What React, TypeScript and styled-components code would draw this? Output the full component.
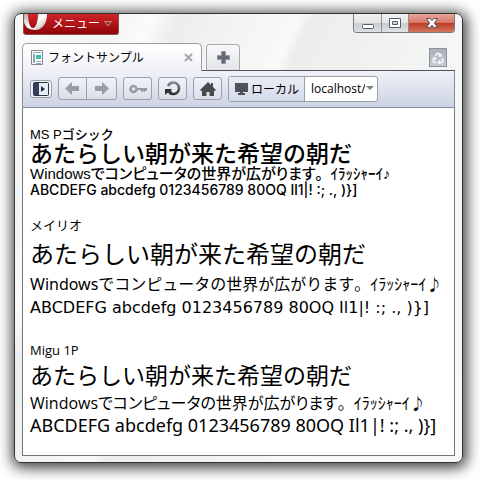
import React from 'react';
import styled, { createGlobalStyle } from 'styled-components';

const GlobalStyle = createGlobalStyle`
  * { box-sizing: border-box; }
  body { margin: 0; background: #fff; color: #000; font-family: "Open Sans", "Noto Sans CJK JP", sans-serif; }
  button, input { font: inherit; color: inherit; margin: 0; }
  svg { display: block; flex: none; }
`;

const Desktop = styled.div`
  padding: 13px 17px 17px 14px;
`;

const Window = styled.main`
  padding: 0 7px 6px;
  border: 1px solid #333;
  border-radius: 7px;
  background: linear-gradient(115deg, #fafafa 0, #f3f4f4 95px, #fbfbfb 125px, #eceeee 150px, #f1f2f2 190px, #f8f9f9 260px, #eceeee 270px, #f5f6f6 420px, #f7f8f8 100%);
  box-shadow: 1px 2px 14px 3px rgba(0, 0, 0, 0.75);
`;

const TitleBar = styled.header`
  display: flex;
  align-items: flex-start;
  justify-content: space-between;
  height: 29px;
`;

const MenuButton = styled.button`
  display: flex;
  align-items: center;
  gap: 3px;
  width: 96px;
  height: 21px;
  margin-left: 1px;
  padding: 0 6px 0 0;
  overflow: hidden;
  border: 1px solid #8a5050;
  border-top: 0;
  border-radius: 0 0 3px 3px;
  background: linear-gradient(#cf2529, #b11316 50%, #8d0507);
  color: #fff;
  font-size: 12px;
  line-height: 20px;
`;

const MenuText = styled.span`
  flex: 1;
  text-align: left;
`;

const Captions = styled.div`
  display: flex;
  height: 19px;
  overflow: hidden;
  border: 1px solid #777b80;
  border-top: 0;
  border-radius: 0 0 4px 4px;
`;

const CaptionButton = styled.button<{ $close?: boolean }>`
  display: grid;
  place-items: center;
  width: ${p => (p.$close ? 46 : 27)}px;
  padding: 0;
  border: 0;
  background: ${p => (p.$close
    ? 'linear-gradient(#e7a69a, #d67868 48%, #bd3c26 52%, #d5765f)'
    : 'linear-gradient(#f1f2f3, #e2e4e6 48%, #cbced1 52%, #dfe1e3)')};
  & + & { border-left: 1px solid #8c9095; }
`;

const TabBar = styled.nav`
  display: flex;
  align-items: flex-end;
  height: 28px;
`;

const Tab = styled.div`
  display: flex;
  align-items: center;
  gap: 5px;
  width: 180px;
  height: 28px;
  padding: 0 8px 0 8px;
  border: 1px solid #999ca3;
  border-bottom: 0;
  border-radius: 5px 5px 0 0;
  background: linear-gradient(#fff, #f0f1f7);
  font-size: 12px;
`;

const TabTitle = styled.span`
  flex: 1;
  line-height: 18px;
`;

const PlainButton = styled.button`
  display: grid;
  place-items: center;
  padding: 0;
  border: 0;
  background: none;
`;

const TabRest = styled.div`
  display: flex;
  align-items: flex-end;
  justify-content: space-between;
  flex: 1;
  height: 28px;
  padding: 0 8px 0 4px;
  border-bottom: 1px solid #51545c;
`;

const NewTab = styled(PlainButton)`
  width: 34px;
  height: 26px;
  border: 1px solid #a5a8ad;
  border-bottom: 0;
  border-radius: 4px 4px 0 0;
  background: linear-gradient(#f9f9fa, #e3e5e9);
`;

const Trash = styled(PlainButton)`
  width: 18px;
  height: 19px;
  margin-bottom: 3px;
  border: 1px solid #8d939b;
  background: linear-gradient(#a9b0ba, #c6cbd2);
`;

const Toolbar = styled.div`
  display: flex;
  align-items: center;
  gap: 6px;
  height: 37px;
  padding: 0 7px 1px;
  border: 1px solid #868a94;
  border-top: 0;
  background: linear-gradient(#f0f1f8, #cdd3e4);
`;

const ToolGroup = styled.div`
  display: flex;
  height: 23px;
  border: 1px solid #9b9fa8;
  border-radius: 3px;
  background: linear-gradient(#f0f2f8, #dbdfea);
`;

const ToolButton = styled(PlainButton)`
  width: 27px;
  & + & { width: 30px; border-left: 1px solid #9b9fa8; }
`;

const PanelToggle = styled(PlainButton)`
  width: 22px;
  height: 18px;
  border: 1px solid #9b9fa8;
  border-radius: 3px;
  background: #eef0f6;
`;

const Address = styled.div`
  display: flex;
  align-items: stretch;
  width: 150px;
  height: 26px;
  overflow: hidden;
  border: 1px solid #9b9fa8;
  border-radius: 3px;
  background: #fff;
  font-size: 12px;
`;

const Scope = styled.label`
  display: flex;
  align-items: center;
  gap: 3px;
  width: 76px;
  padding-left: 6px;
  border-right: 1px solid #9b9fa8;
  background: linear-gradient(#eaedf5, #d4daea);
  white-space: nowrap;
`;

const AddressInput = styled.input`
  flex: 1;
  min-width: 0;
  padding: 0 0 0 6px;
  border: 0;
  outline: 0;
  background: #fff;
`;

const Page = styled.article`
  display: flex;
  flex-direction: column;
  padding: 19px 7px 19px;
  border: 1px solid #73767b;
  border-top: 0;
  background: #fff;
`;

type Metrics = {
  $font: string;
  $weight: number;
  $gap: number;
  $label: number;
  $head: number;
  $headLine: number;
  $line: number;
};

const Sample = styled.section<Metrics>`
  margin-top: ${p => p.$gap}px;
  font-family: ${p => p.$font}, "Noto Sans CJK JP", sans-serif;
  white-space: nowrap;
  h2, h3, p { margin: 0; font-weight: ${p => p.$weight}; }
  h2 { font-size: 13px; line-height: ${p => p.$label}px; }
  h3 { font-size: ${p => p.$head}px; line-height: ${p => p.$headLine}px; }
  p { line-height: ${p => p.$line}px; }
`;

const Sentence = styled.p<{ $size: number }>`
  font-size: ${p => p.$size}px;
`;

const Kana = styled.span<{ $proportional: boolean }>`
  font-feature-settings: ${p => (p.$proportional ? '"palt"' : 'normal')};
`;

const Alphabet = styled.p<{ $size: number; $font: string }>`
  font-family: ${p => p.$font}, sans-serif;
  font-size: ${p => p.$size}px;
`;

const samples = [
  { name: 'MS Pゴシック', font: '"Liberation Sans"', weight: 500, gap: 0, label: 15, head: 23, headLine: 24, size: 15, proportional: true, latinFont: 'Inter', latin: 14, line: 16 },
  { name: 'メイリオ', font: '"Noto Sans"', weight: 400, gap: 17, label: 20, head: 24, headLine: 37, size: 16, proportional: false, latinFont: '"DejaVu Sans"', latin: 16, line: 24 },
  { name: 'Migu 1P', font: '"Open Sans"', weight: 400, gap: 22, label: 17, head: 23, headLine: 33, size: 16, proportional: true, latinFont: '"Noto Sans"', latin: 18, line: 22 },
];

const Arrow = ({ back }: { back?: boolean }) => (
  <svg width="15" height="13" viewBox="0 0 15 13" fill="#989ca3">
    <path d={back ? 'M0 6.5 7 0v4h7v5H7v4z' : 'M15 6.5 8 0v4H1v5h7v4z'} />
  </svg>
);

export default function App() {
  return (
    <>
      <GlobalStyle />
      <Desktop>
        <Window>
          <TitleBar>
            <MenuButton>
              <svg width="25" height="20" viewBox="0 0 25 20">
                <defs>
                  <linearGradient id="ring" x1="0" x2="1" y2="1">
                    <stop stopColor="#aaa" />
                    <stop offset=".5" stopColor="#fff" />
                    <stop offset="1" stopColor="#aaa" />
                  </linearGradient>
                </defs>
                <path fillRule="evenodd" fill="url(#ring)" d="M0 0h23c0 10-5 16-12 16C5 16 1 13 0 8zM4 0c0 8 2 14 5 14s5-7 5-14z" />
              </svg>
              <MenuText>メニュー</MenuText>
              <svg width="8" height="6" viewBox="0 0 8 6"><path d="M.5.5h7L4 5z" fill="#7d3425" stroke="#c98878" /></svg>
            </MenuButton>
            <Captions>
              <CaptionButton aria-label="最小化">
                <svg width="12" height="14" viewBox="0 0 12 14"><rect x=".5" y="8.5" width="11" height="4" rx="1" fill="#fff" stroke="#555a66" /></svg>
              </CaptionButton>
              <CaptionButton aria-label="最大化">
                <svg width="12" height="10" viewBox="0 0 12 10"><path d="M.5.5h11v9H.5zM3.5 3.5h5v3h-5z" fill="#fff" fillRule="evenodd" stroke="#555a66" /></svg>
              </CaptionButton>
              <CaptionButton $close aria-label="閉じる">
                <svg width="12" height="10" viewBox="0 0 12 10"><path d="M.5.5h3.6L6 2.7 7.9.5h3.6L8.3 5l3.2 4.5H7.9L6 7.3 4.1 9.5H.5L3.7 5z" fill="#fff" stroke="#555a66" /></svg>
              </CaptionButton>
            </Captions>
          </TitleBar>
          <TabBar>
            <Tab>
              <svg width="12" height="15" viewBox="0 0 12 15">
                <path d="M.5.5h11v14H.5z" fill="#fff" stroke="#878b91" />
                <path d="M2 2h8v1H2zM2 4h2v9H2zM5 11h5v1H5zM5 13h5v1H5z" fill="#8ea8b5" />
                <path d="M5 5h5v4H5z" fill="#22b9d3" />
                <path d="M6 7h3v2H6z" fill="#64c860" />
              </svg>
              <TabTitle>フォントサンプル</TabTitle>
              <PlainButton aria-label="タブを閉じる">
                <svg width="9" height="9" viewBox="0 0 9 9"><path d="m1 1 7 7m0-7L1 8" stroke="#a4a6aa" strokeWidth="2" /></svg>
              </PlainButton>
            </Tab>
            <TabRest>
              <NewTab aria-label="新しいタブ">
                <svg width="13" height="13" viewBox="0 0 13 13"><path d="M4.5.5h4v4h4v4h-4v4h-4v-4h-4v-4h4z" fill="#656a78" stroke="#9296a0" /></svg>
              </NewTab>
              <Trash aria-label="ごみ箱">
                <svg width="12" height="12" viewBox="0 0 12 12" fill="none" stroke="#f5f7fa" strokeWidth="1.5">
                  <path d="M3.5 4 5 1.5h2L8.5 4M6.5 4h2.3V1.8M9.5 6l1.5 2.5-1 2H7M8 8.500l-1.500 2L8 12M4.5 10.5H2l-1-2L2.5 6M.8 6.5l2-.8 1 2" />
                </svg>
              </Trash>
            </TabRest>
          </TabBar>
          <Toolbar>
            <PanelToggle aria-label="パネル">
              <svg width="16" height="14" viewBox="0 0 16 14">
                <rect x=".5" y=".5" width="15" height="13" rx="1" fill="#e7ebf5" stroke="#293248" />
                <path d="M1 1h5v12H1z" fill="#34405b" />
                <path d="m8 4 4 3-4 3z" fill="#222a3d" />
              </svg>
            </PanelToggle>
            <ToolGroup>
              <ToolButton aria-label="戻る"><Arrow back /></ToolButton>
              <ToolButton aria-label="進む"><Arrow /></ToolButton>
            </ToolGroup>
            <ToolGroup>
              <ToolButton aria-label="パスワード">
                <svg width="18" height="10" viewBox="0 0 18 10">
                  <circle cx="4.5" cy="5" r="3" fill="none" stroke="#989ca3" strokeWidth="2.5" />
                  <path d="M8 4h10v3h-2v1h-1V7h-1v1h-2V6H8z" fill="#989ca3" />
                </svg>
              </ToolButton>
            </ToolGroup>
            <ToolGroup>
              <ToolButton aria-label="再読み込み">
                <svg width="16" height="15" viewBox="0 0 16 15">
                  <defs>
                    <linearGradient id="turn" y2="1" x2="0">
                      <stop stopColor="#85878b" />
                      <stop offset="1" stopColor="#303133" />
                    </linearGradient>
                  </defs>
                  <path d="M3 5c1-2 3-3.5 5.5-3.5 3 0 5.5 2.5 5.5 5.8S11.5 13 8.500 13C7 13 5.5 12.5 4.5 11.5" fill="none" stroke="url(#turn)" strokeWidth="2.6" />
                  <path d="M0 8h7L6 9.5l1 3-2 1-2-2L0 14z" fill="#333" />
                </svg>
              </ToolButton>
            </ToolGroup>
            <ToolGroup>
              <ToolButton aria-label="ホーム">
                <svg width="16" height="14" viewBox="0 0 16 14"><path d="M0 8 8 0l3 3V1h2v4l3 3-1 1-1-.5V14H9.5v-4h-3v4H2V8.5L1 9z" fill="#494a4c" /></svg>
              </ToolButton>
            </ToolGroup>
            <Address>
              <Scope htmlFor="address">
                <svg width="13" height="13" viewBox="0 0 13 13" fill="#505257"><path d="M0 1h13v9H8v1h2v2H3v-2h2v-1H0z" /></svg>
                ローカル
              </Scope>
              <AddressInput id="address" defaultValue="localhost/" />
              <PlainButton aria-label="履歴">
                <svg width="12" height="5" viewBox="0 0 12 5"><path d="M1 0h8L5 4z" fill="#7c828e" /></svg>
              </PlainButton>
            </Address>
          </Toolbar>
          <Page>
            {samples.map(s => (
              <Sample key={s.name} $font={s.font} $weight={s.weight} $gap={s.gap} $label={s.label} $head={s.head} $headLine={s.headLine} $line={s.line}>
                <h2>{s.name}</h2>
                <h3>あたらしい朝が来た希望の朝だ</h3>
                <Sentence $size={s.size}>
                  <Kana $proportional={s.proportional}>Windowsでコンピュータの世界が広がります</Kana>。ｲﾗｯｼｬｰｲ♪
                </Sentence>
                <Alphabet $size={s.latin} $font={s.latinFont}>{'ABCDEFG abcdefg 0123456789 80OQ Il1|! :; ., )}]'}</Alphabet>
              </Sample>
            ))}
          </Page>
        </Window>
      </Desktop>
    </>
  );
}
